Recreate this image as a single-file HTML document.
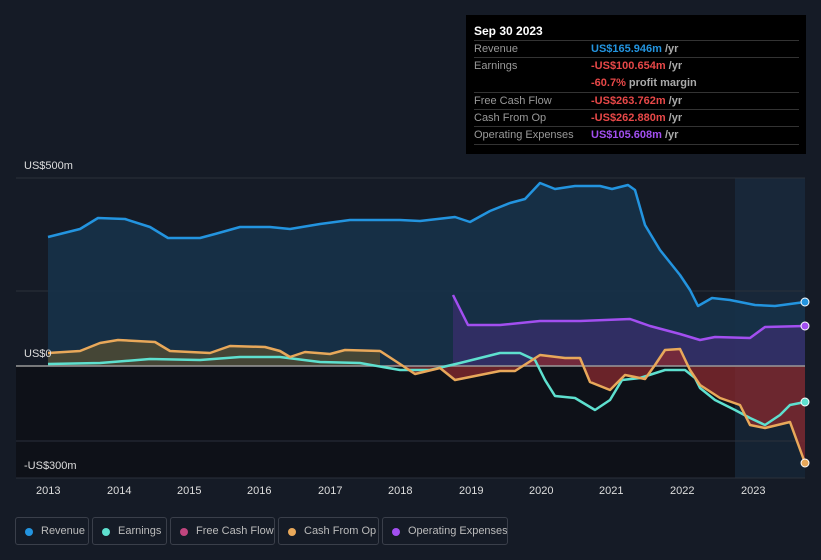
<!DOCTYPE html>
<html><head><meta charset="utf-8"><style>
body{margin:0;width:821px;height:560px;background:#151b26;font-family:"Liberation Sans",sans-serif;overflow:hidden;position:relative}
.tt{position:absolute;left:466px;top:15px;width:340px;height:139px;background:#000;color:#fff}
.tt .h{position:absolute;left:8px;top:9px;font-size:12px;font-weight:bold}
.row{position:absolute;left:8px;width:325px;border-top:1px solid #333;font-size:11px;color:#999;height:17px}
.row span{position:absolute;left:0;top:2px}
.row b{position:absolute;left:117px;top:2px;font-weight:bold}
.row i{font-style:normal;color:#aaa;font-weight:bold}
.ax{position:absolute;font-size:11px;color:#ddd}
.lg{position:absolute;top:517px;height:28px;border:1px solid #3a3f4a;border-radius:3px;color:#bbb;font-size:11px;line-height:27px;box-sizing:border-box;white-space:nowrap;padding-left:25px;overflow:hidden}
.lg:before{content:"";position:absolute;left:9px;top:10px;width:8px;height:8px;border-radius:50%;background:var(--c)}
</style></head><body>
<svg width="821" height="560" style="position:absolute;left:0;top:0">
<rect x="16" y="178" width="789" height="300" fill="#151b26"/>
<rect x="16" y="366" width="789" height="112" fill="#0e1118"/>
<rect x="735" y="178" width="70" height="300" fill="#1a3146" opacity="0.6"/>
<g stroke="#2a303b" stroke-width="1">
<line x1="16" y1="178" x2="805" y2="178"/><line x1="16" y1="291" x2="805" y2="291"/>
<line x1="16" y1="441" x2="805" y2="441"/><line x1="16" y1="478" x2="805" y2="478"/>
</g>
<path d="M48,237 L80,229 98,218 125,219 150,227 168,238 200,238 215,234 240,227 270,227 290,229 320,224 350,220 400,220 420,221 455,217 470,222 490,211 510,203 525,199 540,183 555,189 575,186 600,186 612,189 628,185 635,190 645,225 660,250 680,275 690,290 698,306 712,298 730,300 755,305 775,306 805,302 L805,366 48,366Z" fill="#163249" opacity="0.9"/>
<path d="M453,295 468,325 500,325 540,321 580,321 630,319 650,326 680,334 700,340 715,337 750,338 765,327 805,326 L805,366 453,366Z" fill="#3a2f6e" opacity="0.75"/>
<path d="M380,366 L400,364 415,374 440,368 455,380 480,375 500,371 515,371 540,355 565,358 580,358 590,382 610,390 625,375 645,379 655,365 665,350 680,349 690,370 700,385 720,398 740,405 750,425 765,428 790,422 805,463 L805,366Z" fill="#8a2a2f" opacity="0.75"/>
<path d="M48,353 80,351 100,343 118,340 155,342 170,351 210,353 230,346 265,347 280,351 290,357 305,352 330,354 345,350 380,351 L380,366 48,366Z" fill="#5a5030" opacity="0.7"/>
<line x1="16" y1="366" x2="805" y2="366" stroke="#999" stroke-width="1.5"/>
<path d="M48,237 L80,229 98,218 125,219 150,227 168,238 200,238 215,234 240,227 270,227 290,229 320,224 350,220 400,220 420,221 455,217 470,222 490,211 510,203 525,199 540,183 555,189 575,186 600,186 612,189 628,185 635,190 645,225 660,250 680,275 690,290 698,306 712,298 730,300 755,305 775,306 805,302" fill="none" stroke="#2394df" stroke-width="2.5" stroke-linejoin="round"/>
<path d="M453,295 468,325 500,325 540,321 580,321 630,319 650,326 680,334 700,340 715,337 750,338 765,327 805,326" fill="none" stroke="#a24ff0" stroke-width="2.5" stroke-linejoin="round"/>
<path d="M48,364 100,363 150,359 200,360 240,357 280,357 320,362 360,363 400,370 430,370 460,363 480,358 500,353 520,353 535,360 545,380 555,396 575,398 595,410 610,400 622,380 640,378 665,370 685,370 695,378 700,388 715,400 735,410 750,418 765,425 780,415 790,405 805,402" fill="none" stroke="#5ee0cf" stroke-width="2.5" stroke-linejoin="round"/>
<path d="M48,353 80,351 100,343 118,340 155,342 170,351 210,353 230,346 265,347 280,351 290,357 305,352 330,354 345,350 380,351 400,364 415,374 440,368 455,380 480,375 500,371 515,371 540,355 565,358 580,358 590,382 610,390 625,375 645,379 655,365 665,350 680,349 690,370 700,385 720,398 740,405 750,425 765,428 790,422 805,463" fill="none" stroke="#e8a85a" stroke-width="2.5" stroke-linejoin="round"/>
<g stroke="#fff" stroke-width="1"><circle cx="805" cy="302" r="4" fill="#2394df"/><circle cx="805" cy="326" r="4" fill="#a24ff0"/><circle cx="805" cy="402" r="4" fill="#5ee0cf"/><circle cx="805" cy="463" r="4" fill="#e8a85a"/></g>
</svg>
<div class="ax" style="left:24px;top:160px">US$500m</div>
<div class="ax" style="left:24px;top:348px">US$0</div>
<div class="ax" style="left:24px;top:460px">-US$300m</div>
<div class="ax" style="left:36px;top:485px">2013</div><div class="ax" style="left:107px;top:485px">2014</div><div class="ax" style="left:177px;top:485px">2015</div><div class="ax" style="left:247px;top:485px">2016</div><div class="ax" style="left:318px;top:485px">2017</div><div class="ax" style="left:388px;top:485px">2018</div><div class="ax" style="left:459px;top:485px">2019</div><div class="ax" style="left:529px;top:485px">2020</div><div class="ax" style="left:599px;top:485px">2021</div><div class="ax" style="left:670px;top:485px">2022</div><div class="ax" style="left:741px;top:485px">2023</div>
<div class="tt"><div class="h">Sep 30 2023</div>
<div class="row" style="top:25px"><span>Revenue</span><b style="color:#2394df">US$165.946m <i>/yr</i></b></div>
<div class="row" style="top:42px;height:34px"><span>Earnings</span><b style="color:#e84848">-US$100.654m <i>/yr</i></b><b style="color:#e84848;top:19px">-60.7% <i>profit margin</i></b></div>
<div class="row" style="top:77px"><span>Free Cash Flow</span><b style="color:#e84848">-US$263.762m <i>/yr</i></b></div>
<div class="row" style="top:94px"><span>Cash From Op</span><b style="color:#e84848">-US$262.880m <i>/yr</i></b></div>
<div class="row" style="top:111px;border-bottom:1px solid #333"><span>Operating Expenses</span><b style="color:#a24ff0">US$105.608m <i>/yr</i></b></div>
</div>
<div class="lg" style="left:15px;width:74px;--c:#2394df">Revenue</div>
<div class="lg" style="left:92px;width:75px;--c:#5ee0cf">Earnings</div>
<div class="lg" style="left:170px;width:105px;--c:#c0457e">Free Cash Flow</div>
<div class="lg" style="left:278px;width:101px;--c:#e8a85a">Cash From Op</div>
<div class="lg" style="left:382px;width:126px;--c:#a24ff0">Operating Expenses</div>
</body></html>
